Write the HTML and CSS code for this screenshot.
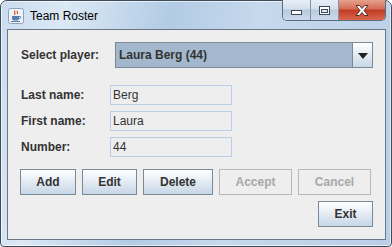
FILE: index.html
```html
<!DOCTYPE html>
<html>
<head>
<meta charset="utf-8">
<link rel="stylesheet" href="styles.css">
</head>
<body>
<div class="window">
  <div class="titlebar">
    <span class="app-icon">
      <svg width="16" height="16" viewBox="0 0 16 16">
        <rect x="0.5" y="0.5" width="15" height="15" rx="2" fill="#eef3f8" stroke="#8ea4bc"/>
        <path d="M7 2.5c-1.5 1.5 1 2.5-0.5 4.5M9.5 3c-1 1 0.8 1.8-0.3 3.2" stroke="#e2561c" stroke-width="1.2" fill="none"/>
        <path d="M4 8h7v2.5c0 1.2-1 2-2 2H6c-1 0-2-0.8-2-2z" fill="#5a7ea8"/>
        <path d="M11 8.5h1.2c0.8 0 0.8 2-0.5 2H11" stroke="#5a7ea8" fill="none"/>
        <rect x="3" y="13" width="9" height="1" fill="#5a7ea8"/>
      </svg>
    </span>
    <span class="title">Team Roster</span>
    <div class="caption">
      <span class="cbtn min">
        <svg width="11" height="6" viewBox="0 0 11 6"><rect x="0.5" y="0.5" width="10" height="4" fill="#fff" stroke="#3c4a5c"/></svg>
      </span>
      <span class="cbtn max">
        <svg width="11" height="9" viewBox="0 0 11 9"><rect x="0.5" y="0.5" width="10" height="8" fill="#fff" stroke="#3c4a5c"/><rect x="2.5" y="3.5" width="6" height="3" fill="#dfe7f0" stroke="#3c4a5c"/></svg>
      </span>
      <span class="cbtn close">
        <svg width="14" height="11" viewBox="0 0 14 11"><path d="M1 0.5h3.5l2.5 3 2.5-3H13l-4 5 4 5H9.5l-2.5-3-2.5 3H1l4-5z" fill="#fff" stroke="#4a2018" stroke-width="0.9"/></svg>
      </span>
    </div>
  </div>
  <div class="content">
    <div class="select-row">
      <span class="label">Select player:</span>
      <div class="combo">
        <span class="combo-text">Laura Berg (44)</span>
        <span class="combo-arrow"><i class="tri"></i></span>
      </div>
    </div>
    <div class="form">
      <div class="field-row"><span class="label flabel">Last name:</span><span class="field">Berg</span></div>
      <div class="field-row"><span class="label flabel">First name:</span><span class="field">Laura</span></div>
      <div class="field-row"><span class="label flabel">Number:</span><span class="field">44</span></div>
    </div>
    <div class="buttons">
      <span class="btn w56">Add</span>
      <span class="btn w55">Edit</span>
      <span class="btn w70">Delete</span>
      <span class="btn dis w73">Accept</span>
      <span class="btn dis w73">Cancel</span>
    </div>
    <div class="exit-row">
      <span class="btn w55">Exit</span>
    </div>
  </div>
</div>
</body>
</html>
```
FILE: styles.css
```css
html, body { margin: 0; padding: 0; }
body { width: 392px; height: 247px; overflow: hidden; font-family: "Liberation Sans", Arial, sans-serif; }
.window {
  width: 392px; height: 247px; box-sizing: border-box;
  border: 1px solid #404c5a; border-radius: 7px 7px 4px 4px;
  background: linear-gradient(100deg, #c9dcef 0%, #dbe8f5 15%, #b2cbe4 40%, #c6d9ed 60%, #b9cfe6 100%);
  padding: 0 5px 6px 6px;
  display: flex; flex-direction: column;
  box-shadow: inset 0 0 0 1px rgba(255,255,255,0.6);
}
.titlebar { height: 28px; display: flex; align-items: flex-start; position: relative; }
.app-icon { margin: 7px 0 0 1px; width: 16px; height: 16px; }
.app-icon svg { display: block; }
.title { margin: 7px 0 0 6px; font-size: 12px; color: #000; font-family: "Liberation Sans", Arial, sans-serif; line-height: 16px; }
.caption {
  position: absolute; right: 0; top: -1px;
  display: flex; height: 20px;
  border: 1px solid #5b6b80; border-top: none;
  border-radius: 0 0 5px 5px; overflow: hidden;
}
.cbtn { display: flex; align-items: center; justify-content: center; height: 20px; }
.cbtn svg { display: block; }
.min, .max {
  width: 27px;
  background: linear-gradient(#e7eef6 0%, #d3dfec 45%, #b9cbe0 50%, #cbdaeb 100%);
  border-right: 1px solid #8293a8;
}
.min svg { margin-top: 5px; }
.close {
  width: 46px;
  background: linear-gradient(#e6a18f 0%, #d56b54 45%, #c13b23 50%, #d8674c 100%);
}
.content {
  flex: 1; background: #eeeeee;
  border: 1px solid #6b7786;
  padding: 12px 12px 0 13px;
  display: flex; flex-direction: column;
}
.label { font-weight: bold; font-size: 12px; color: #333; }
.select-row { display: flex; align-items: center; height: 26px; }
.select-row .label { width: 94px; }
.combo {
  flex: 1; height: 26px; box-sizing: border-box;
  border: 1px solid #7a8a99; background: #a3b8cc;
  display: flex; align-items: center;
}
.combo-text { flex: 1; padding-left: 3px; font-weight: bold; font-size: 12px; color: #333; }
.combo-arrow {
  width: 20px; height: 24px; box-sizing: border-box;
  border-left: 1px solid #7a8a99;
  background: linear-gradient(#ffffff, #c8d7e6);
  display: flex; align-items: center; justify-content: center;
}
.tri { width: 0; height: 0; border-left: 5px solid transparent; border-right: 5px solid transparent; border-top: 6px solid #222; margin-top: 1px; }
.form { margin-top: 17px; display: flex; flex-direction: column; gap: 6px; }
.field-row { display: flex; align-items: center; height: 20px; }
.flabel { width: 89px; }
.field {
  width: 122px; height: 20px; box-sizing: border-box;
  border: 1px solid #b8cfe5; background: #eeeeee;
  font-size: 12px; color: #333; padding-left: 2px; line-height: 18px;
}
.buttons { margin-top: 12px; display: flex; gap: 6px; margin-left: -1px; }
.btn {
  height: 26px; box-sizing: border-box;
  border: 1px solid #7a8a99;
  background: linear-gradient(#ffffff 0%, #eef3f8 30%, #c7d6e6 100%);
  display: flex; align-items: center; justify-content: center;
  font-weight: bold; font-size: 12px; color: #333;
}
.btn.dis { background: #eeeeee; border-color: #b8b8b8; color: #a8a8a8; }
.w56 { width: 56px; } .w55 { width: 55px; } .w70 { width: 70px; } .w73 { width: 73px; }
.exit-row { margin-top: 6px; display: flex; justify-content: flex-end; }
```
